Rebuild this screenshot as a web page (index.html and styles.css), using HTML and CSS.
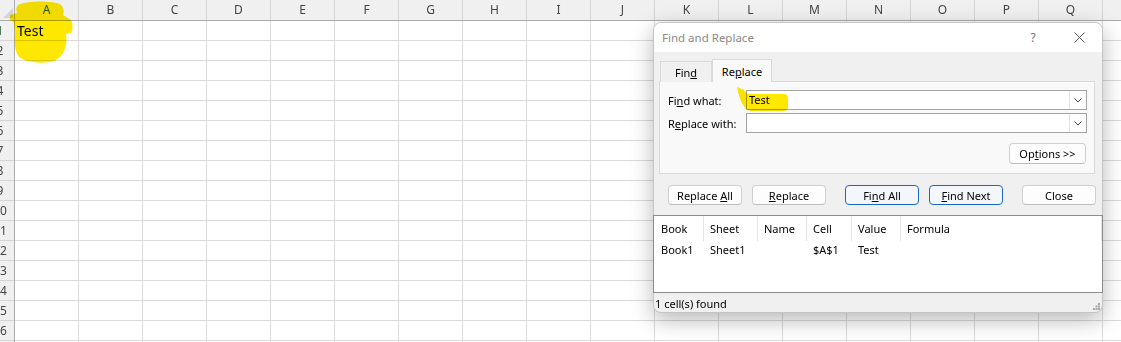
FILE: index.html
```html
<!DOCTYPE html>
<html>
<head>
  <title>Find and Replace</title>
  <link rel="stylesheet" href="styles.css">
</head>

<body>
  <div class="sheet">
    <div class="col-heads">
      <div class="corner"><span class="corner-mark"></span></div>
      <div class="col-head col-head-active">A</div>
      <div class="col-head">B</div>
      <div class="col-head">C</div>
      <div class="col-head">D</div>
      <div class="col-head">E</div>
      <div class="col-head">F</div>
      <div class="col-head">G</div>
      <div class="col-head">H</div>
      <div class="col-head">I</div>
      <div class="col-head">J</div>
      <div class="col-head">K</div>
      <div class="col-head">L</div>
      <div class="col-head">M</div>
      <div class="col-head">N</div>
      <div class="col-head">O</div>
      <div class="col-head">P</div>
      <div class="col-head">Q</div>
      <div class="col-head"></div>
    </div>

    <div class="sheet-body">
      <div class="row-heads">
        <div class="row-head row-head-active">1</div>
        <div class="row-head">2</div>
        <div class="row-head">3</div>
        <div class="row-head">4</div>
        <div class="row-head">5</div>
        <div class="row-head">6</div>
        <div class="row-head">7</div>
        <div class="row-head">8</div>
        <div class="row-head">9</div>
        <div class="row-head">10</div>
        <div class="row-head">11</div>
        <div class="row-head">12</div>
        <div class="row-head">13</div>
        <div class="row-head">14</div>
        <div class="row-head">15</div>
        <div class="row-head">16</div>
        <div class="row-head"></div>
      </div>
      <div class="cells">
        <div class="cell-a1">Test</div>
      </div>
    </div>

    <!-- highlighter scribble over A1 -->
    <svg class="marker marker-sheet" width="80" height="66" viewBox="0 0 80 66">
      <path d="M18 5 C24 1 54 0 61 5 C64 8 64 12 63 15 L71 20 C73 24 73 30 71 33 L66 34 C68 44 64 57 54 61 C44 64 26 63 19 57 C15 52 14 44 15 34 L14 22 L10 20 L10 15 L17 13 C16 10 16 7 18 5 Z" fill="#ffe800"/>
    </svg>
  </div>

  <div class="dialog">
    <div class="title-bar">
      <span class="title-text">Find and Replace</span>
      <span class="title-btn title-help">?</span>
      <span class="title-btn">
        <svg width="11" height="11" viewBox="0 0 11 11">
          <path d="M0.5 0.5 L10.5 10.5 M10.5 0.5 L0.5 10.5" stroke="#555" stroke-width="1"/>
        </svg>
      </span>
    </div>

    <div class="dialog-body">
      <div class="tabs">
        <div class="tab">Fin<u>d</u></div>
        <div class="tab tab-active">Re<u>p</u>lace</div>
      </div>

      <div class="panel">
        <div class="field-row">
          <label class="field-label">Fi<u>n</u>d what:</label>
          <div class="combo">
            <span class="combo-text">Test</span>
            <span class="combo-btn">
              <svg width="8" height="5" viewBox="0 0 8 5"><polyline points="0.5,0.5 4,4 7.5,0.5" fill="none" stroke="#444"/></svg>
            </span>
          </div>
        </div>
        <div class="field-row">
          <label class="field-label">R<u>e</u>place with:</label>
          <div class="combo">
            <span class="combo-text"></span>
            <span class="combo-btn">
              <svg width="8" height="5" viewBox="0 0 8 5"><polyline points="0.5,0.5 4,4 7.5,0.5" fill="none" stroke="#444"/></svg>
            </span>
          </div>
        </div>
        <div class="options-row">
          <button type="button" class="btn btn-options">Op<u>t</u>ions &gt;&gt;</button>
        </div>
      </div>

      <div class="actions">
        <button type="button" class="btn">Replace <u>A</u>ll</button>
        <button type="button" class="btn btn-gap"><u>R</u>eplace</button>
        <button type="button" class="btn btn-default btn-gap-wide">Fi<u>n</u>d All</button>
        <button type="button" class="btn btn-default btn-gap"><u>F</u>ind Next</button>
        <button type="button" class="btn btn-gap-wide">Close</button>
      </div>
    </div>

    <div class="results">
      <div class="res-grid res-head">
        <div>Book</div>
        <div>Sheet</div>
        <div>Name</div>
        <div>Cell</div>
        <div>Value</div>
        <div>Formula</div>
      </div>
      <div class="res-grid res-row">
        <div>Book1</div>
        <div>Sheet1</div>
        <div></div>
        <div>$A$1</div>
        <div>Test</div>
        <div></div>
      </div>
    </div>

    <div class="status-bar">
      1 cell(s) found
      <svg class="grip" width="7" height="7" viewBox="0 0 7 7">
        <rect x="5" y="0" width="2" height="2" fill="#a8a8a8"/>
        <rect x="2.5" y="2.5" width="2" height="2" fill="#a8a8a8"/>
        <rect x="5" y="2.5" width="2" height="2" fill="#a8a8a8"/>
        <rect x="0" y="5" width="2" height="2" fill="#a8a8a8"/>
        <rect x="2.5" y="5" width="2" height="2" fill="#a8a8a8"/>
        <rect x="5" y="5" width="2" height="2" fill="#a8a8a8"/>
      </svg>
    </div>

    <!-- highlighter stroke over the search text -->
    <svg class="marker marker-find" width="52" height="26" viewBox="0 0 52 26">
      <path d="M0 0 L7 3 L10 7 L47 7 Q51 7 51 12 L51 20 Q51 24 46 24 L14 24 Q8 23 5 16 Q2 10 0 0 Z" fill="#ffe800"/>
    </svg>
  </div>
</body>
</html>
```

FILE: styles.css
```css
* {
  box-sizing: border-box;
}

body {
  margin: 0;
  overflow: hidden;
  font-family: "Segoe UI", "Noto Sans", sans-serif;
  background-color: #fff;
}

/* spreadsheet */

.sheet {
  position: relative;
  width: 1121px;
  height: 342px;
  overflow: hidden;
}

.col-heads {
  display: flex;
  height: 21px;
  background-color: #f0f0f0;
  border-bottom: 1px solid #ababab;
}

.corner {
  position: relative;
  flex: none;
  width: 15px;
  border-right: 1px solid #ababab;
}

.corner-mark {
  position: absolute;
  right: 1px;
  bottom: 2px;
  width: 0;
  height: 0;
  border-left: 10px solid transparent;
  border-bottom: 10px solid #d4d4d4;
}

.col-head {
  flex: none;
  width: 64px;
  border-right: 1px solid #d4d4d4;
  text-align: center;
  line-height: 20px;
  font-size: 12px;
  color: #444;
}

.col-head-active {
  color: #1f5e2e;
}

.sheet-body {
  display: flex;
}

.row-heads {
  flex: none;
  width: 15px;
  overflow: hidden;
  background-color: #f0f0f0;
  border-right: 1px solid #ababab;
}

/* the header is scrolled: only the right half of each label shows */
.row-head {
  width: 30px;
  height: 20px;
  margin-left: -15px;
  border-bottom: 1px solid #d4d4d4;
  text-align: center;
  line-height: 19px;
  font-size: 12px;
  color: #444;
}

.row-head-active {
  color: #1f5e2e;
}

.cells {
  flex: 1;
  height: 321px;
  background-color: #fff;
  background-image:
    repeating-linear-gradient(to right, transparent 0 63px, #dadada 63px 64px),
    repeating-linear-gradient(to bottom, transparent 0 19px, #dadada 19px 20px);
}

.cell-a1 {
  width: 63px;
  height: 19px;
  padding-left: 2px;
  font-family: "Noto Sans", sans-serif;
  font-size: 14px;
  line-height: 20px;
  color: #000;
}

.marker {
  position: absolute;
  mix-blend-mode: multiply;
  pointer-events: none;
}

.marker-sheet {
  left: 0;
  top: 0;
}

.marker-find {
  left: 83px;
  top: 64px;
}

/* dialog */

.dialog {
  position: absolute;
  left: 653px;
  top: 22px;
  width: 450px;
  height: 291px;
  display: flex;
  flex-direction: column;
  border: 1px solid #c4c4c4;
  border-radius: 8px;
  background-color: #f0f0f0;
  box-shadow: 0 7px 22px rgba(0, 0, 0, 0.28);
  font-size: 11px;
  color: #000;
}

.title-bar {
  display: flex;
  align-items: center;
  height: 29px;
  padding-left: 8px;
  background-color: #fff;
  border-radius: 7px 7px 0 0;
  font-size: 11.5px;
  color: #8a8a8a;
}

.title-text {
  flex: 1;
}

.title-btn {
  display: flex;
  align-items: center;
  justify-content: center;
  width: 46px;
  height: 29px;
}

.title-help {
  font-size: 12px;
  color: #777;
}

.dialog-body {
  padding: 7px 7px 0 5px;
}

.tabs {
  display: flex;
  align-items: flex-end;
  height: 23px;
  margin-bottom: -1px;
  padding-left: 1px;
}

.tab {
  display: flex;
  align-items: center;
  justify-content: center;
  width: 52px;
  height: 21px;
  border: 1px solid #d9d9d9;
  border-bottom: none;
  background-color: #f0f0f0;
}

.tab-active {
  position: relative;
  z-index: 1;
  width: 60px;
  height: 23px;
  padding-top: 1px;
  background-color: #f9f9f9;
}

.panel {
  height: 93px;
  padding: 8px 7px 9px 8px;
  border: 1px solid #d9d9d9;
  background-color: #f9f9f9;
}

.field-row {
  display: flex;
  align-items: center;
  height: 20px;
}

.field-row + .field-row {
  margin-top: 3px;
}

.field-label {
  flex: none;
  width: 78px;
}

.combo {
  display: flex;
  flex: 1;
  height: 20px;
  border: 1px solid #a3a3a3;
  background-color: #fff;
}

.combo-text {
  flex: 1;
  padding-left: 2px;
  line-height: 18px;
}

.combo-btn {
  display: flex;
  align-items: center;
  justify-content: center;
  width: 17px;
  border-left: 1px solid #e3e3e3;
}

.options-row {
  display: flex;
  justify-content: flex-end;
  margin-top: 10px;
}

.btn {
  flex: none;
  width: 74px;
  height: 20px;
  padding: 0;
  border: 1px solid #d0d0d0;
  border-bottom-color: #bdbdbd;
  border-radius: 4px;
  background-color: #fdfdfd;
  font-family: inherit;
  font-size: 11px;
  color: #000;
}

.btn-options {
  width: 77px;
  height: 21px;
  margin-right: 1px;
}

.btn-default {
  border-color: #1b68c4;
  background-color: #f3f7fc;
}

.actions {
  display: flex;
  margin-top: 11px;
  padding-left: 9px;
}

.btn-gap {
  margin-left: 10px;
}

.btn-gap-wide {
  margin-left: 19px;
}

.results {
  height: 78px;
  margin: 10px -1px 0;
  border: 1px solid #8c8c8c;
  background-color: #fff;
}

.res-grid {
  display: grid;
  grid-template-columns: 50px 54px 49px 45px 49px 1fr;
}

.res-grid div {
  padding-left: 6px;
  white-space: nowrap;
}

.res-grid div:first-child {
  padding-left: 7px;
}

.res-head div {
  height: 25px;
  line-height: 25px;
  border-right: 1px solid #e5e5e5;
}

.res-row div {
  height: 18px;
  line-height: 18px;
}

.status-bar {
  position: relative;
  height: 19px;
  padding: 2px 0 0 1px;
  line-height: 18px;
  border-radius: 0 0 7px 7px;
}

.grip {
  position: absolute;
  right: 2px;
  bottom: 2px;
}
```
